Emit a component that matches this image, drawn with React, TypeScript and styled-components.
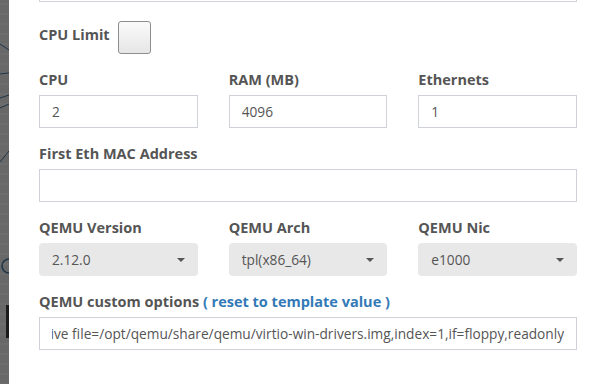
import React, { useEffect, useRef } from "react";
import styled, { createGlobalStyle } from "styled-components";

const GlobalStyle = createGlobalStyle`
  html, body {
    margin: 0;
    padding: 0;
    background: #ffffff;
  }
  body {
    font-family: "Open Sans", "Noto Sans", sans-serif;
  }
`;

const Page = styled.div`
  display: flex;
  width: 601px;
  height: 384px;
  overflow: hidden;
`;

const Backdrop = styled.div`
  width: 9px;
  flex: none;
  background: #686868;
`;

const Panel = styled.div`
  flex: 1;
  padding: 0 24px 0 30px;
  background: #ffffff;
`;

const Group = styled.div<{ $clip?: boolean }>`
  margin-top: ${(p) => (p.$clip ? "-31px" : "0")};
  margin-bottom: 16px;
`;

const Row = styled.div`
  display: grid;
  grid-template-columns: repeat(3, 1fr);
  column-gap: 31px;
`;

const Label = styled.label`
  display: block;
  font-size: 14.5px;
  line-height: 20px;
  font-weight: 700;
  color: #555555;
  margin-bottom: 5px;
  white-space: nowrap;
`;

const ResetLink = styled.a`
  color: #337ab7;
  text-decoration: none;
  cursor: pointer;
`;

const CheckRow = styled.div`
  display: flex;
  align-items: flex-start;
  gap: 8px;
  padding-top: 3px;
`;

const CheckLabel = styled(Label)`
  margin: 4px 0 0;
`;

const Check = styled.input`
  appearance: none;
  margin: 0;
  width: 33px;
  height: 33px;
  border: 1px solid #8e8e8e;
  border-radius: 3px;
  background: linear-gradient(#fafafa, #e6e6e6);
  box-sizing: border-box;
`;

const TextInput = styled.input`
  display: block;
  width: 100%;
  height: 33px;
  box-sizing: border-box;
  padding: 6px 12px;
  border: 1px solid #cfd2da;
  border-radius: 0;
  background: #ffffff;
  font-family: "Open Sans", "Noto Sans", sans-serif;
  font-size: 13.7px;
  color: #555555;
  outline: none;
`;

const SelectBox = styled.div`
  display: flex;
  align-items: center;
  justify-content: space-between;
  height: 33px;
  box-sizing: border-box;
  padding: 0 13px 0 13px;
  border-radius: 4px;
  background: #e8e8e8;
  font-size: 13.7px;
  color: #555555;
`;

const Caret = styled.span`
  width: 0;
  height: 0;
  border-left: 4px solid transparent;
  border-right: 4px solid transparent;
  border-top: 4px solid #555555;
`;

const customOptions =
  "-machine type=pc,accel=kvm -cpu host,+pcid,+kvm_pv_unhalt,+kvm_pv_eoi,hv_spinlocks=0x1fff,hv_vapic,hv_time,hv_reset,hv_vpindex,hv_runtime,hv_relaxed,hv_synic,hv_stimer -vga std -usbdevice tablet -boot order=cd -drive file=/opt/qemu/share/qemu/virtio-win-drivers.img,index=1,if=floppy,readonly";

function Field({ label, value }: { label: string; value: string }) {
  return (
    <div>
      <Label>{label}</Label>
      <TextInput type="text" defaultValue={value} />
    </div>
  );
}

function Select({ label, value }: { label: string; value: string }) {
  return (
    <div>
      <Label>{label}</Label>
      <SelectBox>
        <span>{value}</span>
        <Caret />
      </SelectBox>
    </div>
  );
}

function BackdropLines() {
  return (
    <svg width="9" height="384" viewBox="0 0 9 384">
      {Array.from({ length: 40 }).map((_, i) => (
        <line key={i} x1="0" x2="9" y1={i * 10 + 4} y2={i * 10 + 4} stroke="#727272" strokeWidth="1" />
      ))}
      <line x1="0" y1="44" x2="9" y2="50" stroke="#1e3548" strokeWidth="1" />
      <line x1="0" y1="74" x2="9" y2="73" stroke="#1e3548" strokeWidth="1" />
      <line x1="0" y1="98" x2="9" y2="95" stroke="#1e3548" strokeWidth="1" />
      <line x1="0" y1="108" x2="9" y2="104" stroke="#1e3548" strokeWidth="1" />
      <line x1="0" y1="162" x2="9" y2="151" stroke="#1e3548" strokeWidth="1" />
      <circle cx="9" cy="266" r="7" fill="none" stroke="#1e3548" strokeWidth="1.5" />
      <rect x="6" y="305" width="3" height="33" fill="#1b1b1b" />
    </svg>
  );
}

export default function App() {
  const customRef = useRef<HTMLInputElement>(null);

  useEffect(() => {
    const el = customRef.current;
    if (el) el.scrollLeft = el.scrollWidth;
  }, []);

  return (
    <Page>
      <GlobalStyle />
      <Backdrop>
        <BackdropLines />
      </Backdrop>
      <Panel>
        <Group $clip>
          <TextInput type="text" defaultValue="" />
        </Group>
        <Group>
          <CheckRow>
            <CheckLabel>CPU Limit</CheckLabel>
            <Check type="checkbox" />
          </CheckRow>
        </Group>
        <Group>
          <Row>
            <Field label="CPU" value="2" />
            <Field label="RAM (MB)" value="4096" />
            <Field label="Ethernets" value="1" />
          </Row>
        </Group>
        <Group>
          <Field label="First Eth MAC Address" value="" />
        </Group>
        <Group>
          <Row>
            <Select label="QEMU Version" value="2.12.0" />
            <Select label="QEMU Arch" value="tpl(x86_64)" />
            <Select label="QEMU Nic" value="e1000" />
          </Row>
        </Group>
        <Group>
          <Label>
            QEMU custom options <ResetLink>( reset to template value )</ResetLink>
          </Label>
          <TextInput ref={customRef} type="text" defaultValue={customOptions} readOnly />
        </Group>
      </Panel>
    </Page>
  );
}
